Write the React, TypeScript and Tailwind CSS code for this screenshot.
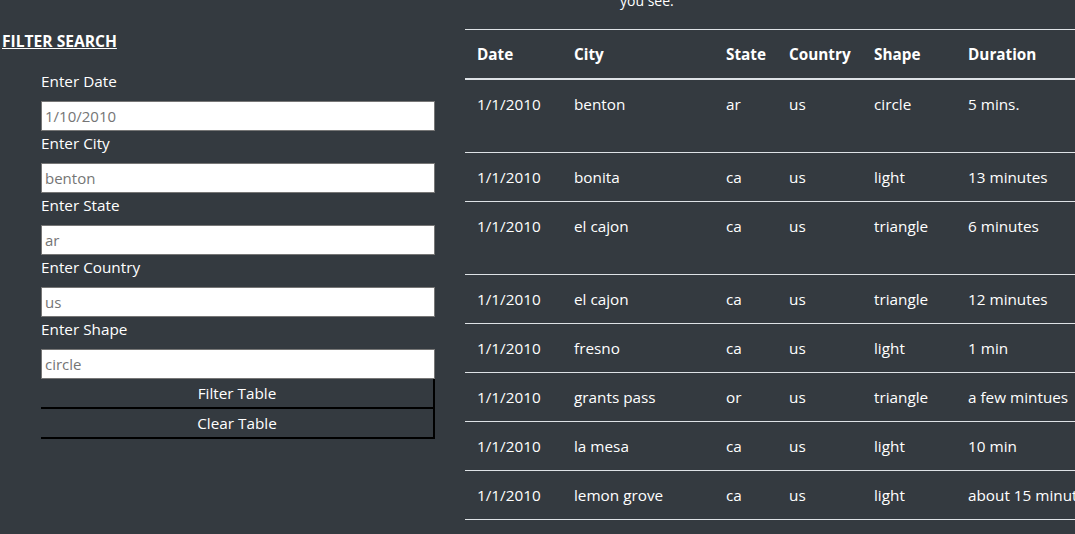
const rows = [
  { date: "1/1/2010", city: "benton", state: "ar", country: "us", shape: "circle", duration: "5 mins.", tall: true },
  { date: "1/1/2010", city: "bonita", state: "ca", country: "us", shape: "light", duration: "13 minutes" },
  { date: "1/1/2010", city: "el cajon", state: "ca", country: "us", shape: "triangle", duration: "6 minutes", tall: true },
  { date: "1/1/2010", city: "el cajon", state: "ca", country: "us", shape: "triangle", duration: "12 minutes" },
  { date: "1/1/2010", city: "fresno", state: "ca", country: "us", shape: "light", duration: "1 min" },
  { date: "1/1/2010", city: "grants pass", state: "or", country: "us", shape: "triangle", duration: "a few mintues" },
  { date: "1/1/2010", city: "la mesa", state: "ca", country: "us", shape: "light", duration: "10 min" },
  { date: "1/1/2010", city: "lemon grove", state: "ca", country: "us", shape: "light", duration: "about 15 minutes" },
];

const filters = [
  { label: "Enter Date", placeholder: "1/10/2010" },
  { label: "Enter City", placeholder: "benton" },
  { label: "Enter State", placeholder: "ar" },
  { label: "Enter Country", placeholder: "us" },
  { label: "Enter Shape", placeholder: "circle" },
];

export default function App() {
  return (
    <div className="flex h-[534px] w-full overflow-hidden bg-[#343a40] font-['Open_Sans',sans-serif] text-[15.3px] text-white">
      <aside className="w-[465px] shrink-0">
        <h2 className="mt-[29px] pl-[2px] text-[15.6px] font-bold leading-6 underline">FILTER SEARCH</h2>
        <form className="mt-4 flex flex-col pl-[41px] pr-[30px]">
          {filters.map((f) => (
            <div key={f.label} className="flex flex-col">
              <label className="mb-2 leading-6">{f.label}</label>
              <input
                className="h-[30px] border border-[#767676] bg-white px-[3px] text-[15px] text-black placeholder:text-[#757575]"
                placeholder={f.placeholder}
              />
            </div>
          ))}
          <button type="button" className="h-[30px] border-r-2 border-b-2 border-black leading-6">
            Filter Table
          </button>
          <button type="button" className="h-[30px] border-r-2 border-b-2 border-black leading-6">
            Clear Table
          </button>
        </form>
      </aside>

      <section className="min-w-0 flex-1 overflow-hidden">
        <p className="-mt-[9px] h-[38px] pl-[155px] text-[14px] leading-5">
          you see.
        </p>
        <table className="w-[820px] table-fixed border-collapse text-left">
          <thead>
            <tr className="border-t border-b-2 border-[#dee2e6]">
              <th className="w-[97px] px-3 py-3 leading-6 font-bold">Date</th>
              <th className="w-[152px] px-3 py-3 leading-6 font-bold">City</th>
              <th className="w-[63px] px-3 py-3 leading-6 font-bold">State</th>
              <th className="w-[85px] px-3 py-3 leading-6 font-bold">Country</th>
              <th className="w-[94px] px-3 py-3 leading-6 font-bold">Shape</th>
              <th className="px-3 py-3 leading-6 font-bold">Duration</th>
            </tr>
          </thead>
          <tbody>
            {rows.map((r, i) => (
              <tr key={i} className={`border-b border-[#dee2e6] align-top ${r.tall ? "h-[73px]" : "h-[49px]"}`}>
                <td className="px-3 py-3 leading-6">{r.date}</td>
                <td className="px-3 py-3 leading-6">{r.city}</td>
                <td className="px-3 py-3 leading-6">{r.state}</td>
                <td className="px-3 py-3 leading-6">{r.country}</td>
                <td className="px-3 py-3 leading-6">{r.shape}</td>
                <td className="whitespace-nowrap px-3 py-3 leading-6">{r.duration}</td>
              </tr>
            ))}
          </tbody>
        </table>
      </section>
    </div>
  );
}
